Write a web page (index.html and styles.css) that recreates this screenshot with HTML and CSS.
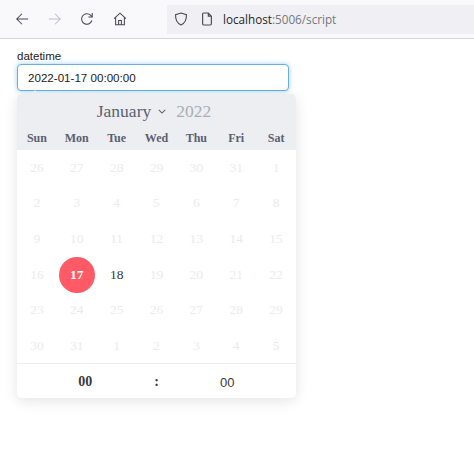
FILE: index.html
```html
<!DOCTYPE html>
<html lang="en">
<head>
    <meta charset="UTF-8">
    <title>datetime</title>
    <link rel="stylesheet" href="styles.css">
</head>
<body>
    <div class="toolbar">
        <div class="nav">
            <svg class="nav-icon" viewBox="0 0 16 16"><path d="M15 8H2M8 2 2 8l6 6"/></svg>
            <svg class="nav-icon disabled" viewBox="0 0 16 16"><path d="M1 8h13M8 2l6 6-6 6"/></svg>
            <svg class="nav-icon" viewBox="0 0 16 16"><path d="M13.6 9.6A6 6 0 1 1 12 3.6L14 5.6M14 1.2v4.4H9.6"/></svg>
            <svg class="nav-icon" viewBox="0 0 16 16"><path d="M1.2 7.6 8 1.4l6.800 6.200M3 6.200V14.500H13V6.200M6.400 14.500V9.800H9.600V14.500"/></svg>
        </div>
        <div class="url-bar">
            <svg class="url-icon" viewBox="0 0 16 16"><path d="M8 1.200 14.200 3C14.500 9 12.500 12.800 8 14.800 3.500 12.800 1.500 9 1.800 3Z"/></svg>
            <svg class="url-icon page" viewBox="0 0 16 16"><path d="M3 2.500Q3 1.200 4.200 1.200H9.500L13 4.700V13.500Q13 14.800 11.800 14.800H4.200Q3 14.800 3 13.500ZM9.500 1.200V4.700H13"/></svg>
            <span class="url">localhost<span class="url-rest">:5006/script</span></span>
        </div>
    </div>

    <div class="content">
        <label class="field-label">datetime</label>
        <input class="field-input" type="text" value="2022-01-17 00:00:00">

        <div class="calendar">
            <div class="cal-head">
                <div class="month-row">
                    <span>January</span>
                    <svg class="chevron" viewBox="0 0 10 6"><path d="M1 1l4 4 4-4"/></svg>
                    <span class="year">2022</span>
                </div>
                <div class="weekdays">
                    <span>Sun</span><span>Mon</span><span>Tue</span><span>Wed</span><span>Thu</span><span>Fri</span><span>Sat</span>
                </div>
            </div>
            <div class="days" id="days"></div>
            <div class="time">
                <span class="hour">00</span>
                <span class="sep">:</span>
                <span class="minute">00</span>
            </div>
        </div>
    </div>

    <script>
        const labels = [26, 27, 28, 29, 30, 31, 1, 2, 3, 4, 5, 6, 7, 8, 9, 10, 11, 12, 13, 14, 15, 16, 17, 18, 19, 20, 21, 22, 23, 24, 25, 26, 27, 28, 29, 30, 31, 1, 2, 3, 4, 5];
        const days = document.getElementById('days');
        labels.forEach(function (label, i) {
            const cell = document.createElement('span');
            cell.className = 'day';
            cell.textContent = label;
            if (i === 22) cell.classList.add('selected');
            if (i === 23) cell.classList.add('enabled');
            days.appendChild(cell);
        });
    </script>
</body>
</html>
```

FILE: styles.css
```css
* {
    box-sizing: border-box;
}

body {
    margin: 0;
    min-height: 100vh;
    background: #fff;
    font-family: 'Liberation Sans', sans-serif;
    color: #222;
}

.toolbar {
    height: 39px;
    display: flex;
    align-items: center;
    background: #f9f9fb;
    border-bottom: 1px solid #d4d4d8;
    padding-left: 15px;
}

.nav {
    display: flex;
    gap: 18.500px;
    width: 152px;
    flex-shrink: 0;
}

.nav-icon {
    width: 14px;
    height: 14px;
    fill: none;
    stroke: #4a4a50;
    stroke-width: 1.200;
}

.nav-icon.disabled {
    stroke: #c0c0c6;
}

.url-bar {
    flex: 1;
    height: 29px;
    display: flex;
    align-items: center;
    background: #f0f0f4;
    padding-left: 7px;
}

.url-icon {
    width: 14px;
    height: 14px;
    fill: none;
    stroke: #48484e;
    stroke-width: 1.300;
    flex-shrink: 0;
}

.url-icon.page {
    margin-left: 12px;
}

.url {
    margin-left: 9px;
    font-family: 'Open Sans', sans-serif;
    font-size: 11.700px;
    color: #26262a;
}

.url-rest {
    color: #77777d;
}

.content {
    padding: 10px 0 40px 17px;
}

.field-label {
    display: block;
    font-size: 11.500px;
    line-height: 14px;
    margin-bottom: 1px;
}

.field-input {
    display: block;
    width: 272px;
    height: 27px;
    padding: 0 10px;
    border: 1px solid #66afe9;
    border-radius: 4px;
    box-shadow: 0 0 5px rgba(102, 175, 233, 0.6);
    outline: none;
    font-family: 'Liberation Sans', sans-serif;
    font-size: 11.600px;
    color: #222;
}

.calendar {
    position: relative;
    width: 279px;
    margin-top: 3px;
    background: #fff;
    border-radius: 5px;
    box-shadow: 0 3px 14px rgba(0, 0, 0, 0.11);
    font-family: 'Liberation Serif', serif;
}

/* notch pointing at the input */
.calendar::before {
    content: '';
    position: absolute;
    top: -4px;
    left: 13px;
    border-left: 5px solid transparent;
    border-right: 5px solid transparent;
    border-bottom: 5px solid #eceef1;
}

.cal-head {
    height: 56px;
    background: #eceef1;
    border-radius: 5px 5px 0 0;
    color: #5a6171;
}

.month-row {
    height: 35px;
    padding-right: 5px;
    display: flex;
    align-items: center;
    justify-content: center;
    font-size: 17.500px;
}

.chevron {
    width: 8px;
    height: 5px;
    margin: 0 10px 0 7px;
    fill: none;
    stroke: #5a6171;
    stroke-width: 1.300;
}

.year {
    color: #a9adb6;
}

.weekdays {
    display: grid;
    grid-template-columns: repeat(7, 1fr);
    font-size: 12px;
    font-weight: bold;
    line-height: 18px;
    text-align: center;
}

.days {
    display: grid;
    grid-template-columns: repeat(7, 1fr);
    grid-auto-rows: 35.600px;
    height: 213px;
    font-size: 13.500px;
}

.day {
    display: flex;
    align-items: center;
    justify-content: center;
    color: #ebebed;
}

.day.enabled {
    color: #393939;
}

.day.selected {
    width: 36px;
    height: 36px;
    justify-self: center;
    border-radius: 50%;
    background: #ff5a65;
    color: #fff;
    font-weight: bold;
}

.time {
    height: 35px;
    padding-top: 2px;
    display: grid;
    grid-template-columns: 1fr 0 1fr;
    align-items: center;
    justify-items: center;
    border-top: 1px solid #eceef1;
    border-radius: 0 0 5px 5px;
    color: #393939;
    font-size: 14px;
}

.hour {
    font-weight: bold;
    margin-right: 3px;
}

.sep {
    font-weight: bold;
}

.minute {
    font-family: 'Liberation Sans', sans-serif;
    font-size: 13px;
    margin-left: 2px;
}
```
